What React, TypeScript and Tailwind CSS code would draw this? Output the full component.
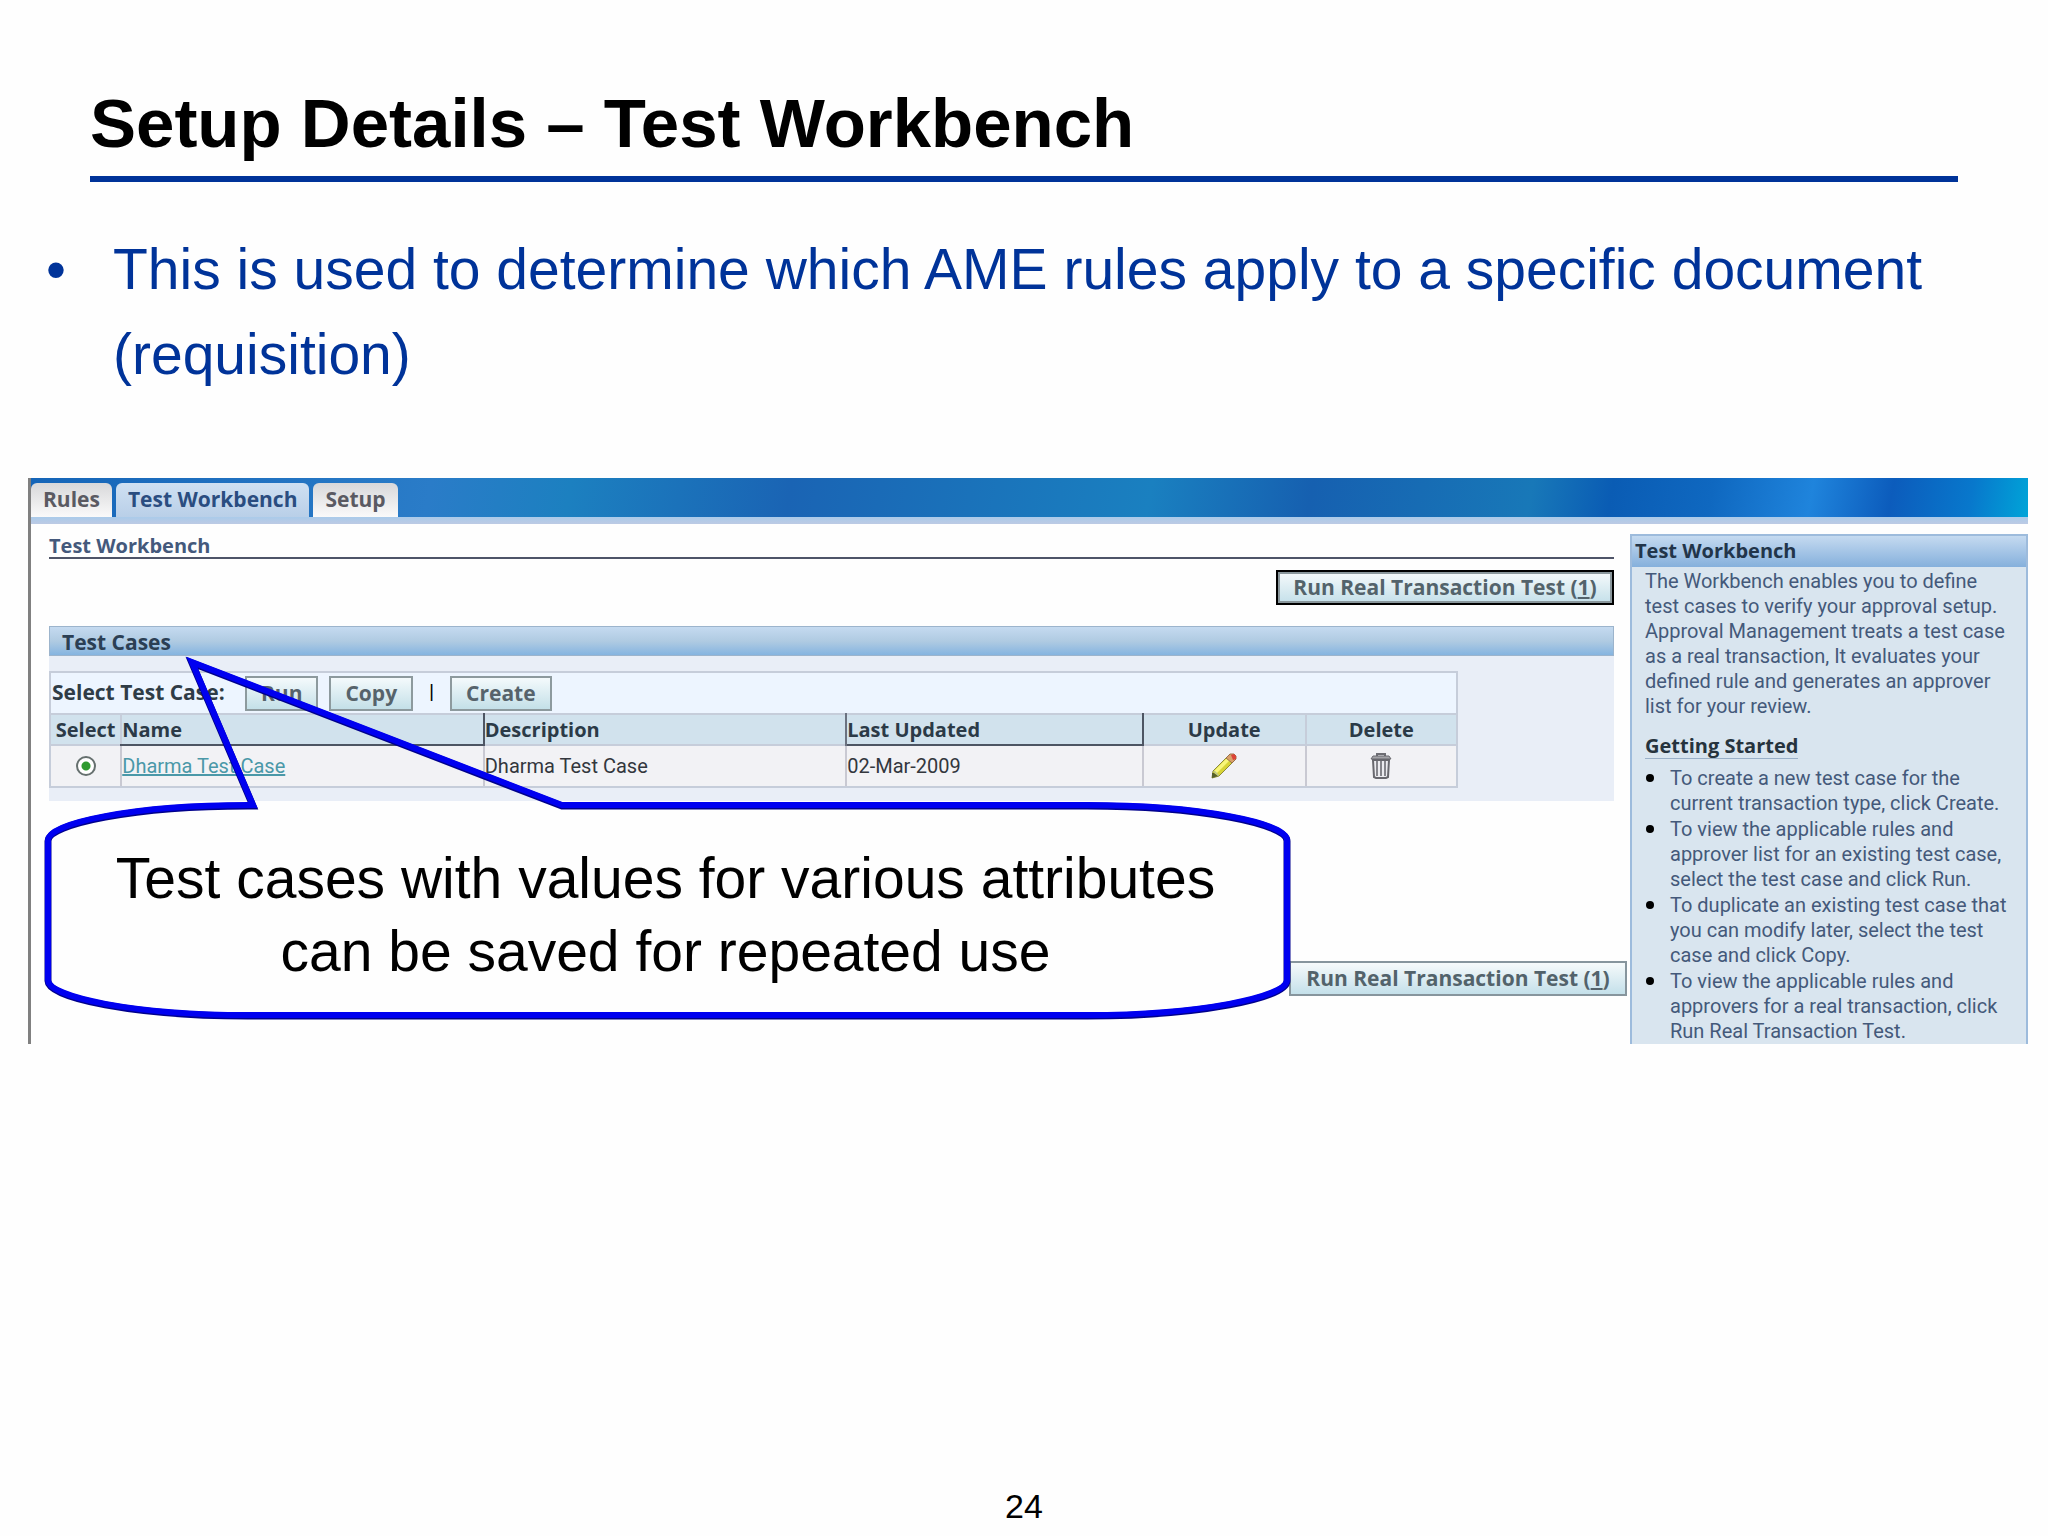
import { ReactNode, useState } from "react"

const NAV_TABS = ["Rules", "Test Workbench", "Setup"]

const HELP_STEPS = [
  ["To create a new test case for the", "current transaction type, click Create."],
  ["To view the applicable rules and", "approver list for an existing test case,", "select the test case and click Run."],
  ["To duplicate an existing test case that", "you can modify later, select the test", "case and click Copy."],
  ["To view the applicable rules and", "approvers for a real transaction, click", "Run Real Transaction Test."],
]

const INTRO_LINES = [
  "The Workbench enables you to define",
  "test cases to verify your approval setup.",
  "Approval Management treats a test case",
  "as a real transaction, It evaluates your",
  "defined rule and generates an approver",
  "list for your review.",
]

const TEST_CASES = [{ id: 1, name: "Dharma Test Case", description: "Dharma Test Case", updated: "02-Mar-2009" }]

function ActionButton({ children }: { children: ReactNode }) {
  return (
    <button className="h-[35px] px-[14px] border-2 border-[#8d9a9e] bg-gradient-to-b from-[#f4fafc] to-[#c4e0e8] font-['Open_Sans',sans-serif] text-[21px] leading-[25px] font-bold text-[#56636b] whitespace-nowrap">
      {children}
    </button>
  )
}

function RunRealButton({ focused = false }: { focused?: boolean }) {
  return (
    <button
      className={`h-[35px] w-[338px] border-2 bg-gradient-to-b from-[#f6fafb] to-[#c4e0ea] font-['Open_Sans',sans-serif] text-[21px] leading-[25px] font-bold text-[#53636b] whitespace-nowrap ${
        focused ? "border-black inset-ring-2 inset-ring-[#8a979c]" : "border-[#87959d]"
      }`}
    >
      Run Real Transaction Test (<span className="underline">1</span>)
    </button>
  )
}

function PencilIcon() {
  return (
    <svg className="mx-auto" width="26" height="26" viewBox="0 0 26 26">
      <path d="M1 25L2 18L16 4L22 9L8 23Z" fill="#d8d436" stroke="#8c8a3a" strokeWidth="1" />
      <path d="M3 18L16 5L19 7L5 21Z" fill="#f8f67a" />
      <path d="M15 5L19 1H23L25 3V6L21 10Z" fill="#d9a06a" stroke="#9a7048" strokeWidth="1" />
      <path d="M20 2L23 1L25 3V6L22 7Z" fill="#dc4438" />
      <path d="M1 25V20L3 20L7 23Z" fill="#56602c" />
      <path d="M2 18L4 20L7 23L8 22L4 18Z" fill="#b9c48c" />
    </svg>
  )
}

function TrashIcon() {
  return (
    <svg className="mx-auto" width="22" height="26" viewBox="0 0 22 26" fill="none">
      <path d="M7 3V1H15V3" stroke="#6e6e74" strokeWidth="2" />
      <path d="M1 6L3 3H19L21 6Z" fill="#a4a4a8" stroke="#68686e" strokeWidth="1" />
      <path d="M3 7H19L18 24L16 25H6L4 24Z" fill="#ececf0" stroke="#68686e" strokeWidth="2" />
      <path d="M7 8V23M11 8V23M15 8V23" stroke="#85858b" strokeWidth="2" />
    </svg>
  )
}

const CALLOUT_PATH =
  "M209 151H204C90 151 4 169 4 186V326C4 343 90 361 204 361H1043C1156 361 1243 343 1243 326V186C1243 169 1156 151 1043 151H518L148 8Z"

// Bubble with its pointer, laid over the test case table
function Callout() {
  return (
    <div className="absolute left-[13px] top-[176px] w-[1247px] pointer-events-none">
      <svg className="block" width="1247" height="366" viewBox="0 0 1247 366" fill="none">
        <path d={CALLOUT_PATH} stroke="#00008c" strokeWidth="7" transform="translate(0 1)" />
        <path d={CALLOUT_PATH} stroke="#0000f0" strokeWidth="6" />
      </svg>
      <p className="absolute left-0 right-1 top-[188px] text-center text-[57px] leading-[73px] text-black font-['Liberation_Sans',sans-serif]">
        Test cases with values for various attributes
        <br />
        can be saved for repeated use
      </p>
    </div>
  )
}

function TestCaseTable() {
  const [selected, setSelected] = useState(1)

  return (
    <div className="mr-[156px] border-2 border-[#c6cdda] bg-[#edf5ff]">
      <div className="flex items-center h-10 pl-px text-[21px] font-bold text-[#2f3c46]">
        <span className="w-[193px] font-['Open_Sans',sans-serif] whitespace-nowrap">Select Test Case:</span>
        <div className="flex items-center gap-[11px]">
          <ActionButton>Run</ActionButton>
          <ActionButton>Copy</ActionButton>
          <span className="w-[15px] text-center font-normal text-black">|</span>
          <ActionButton>Create</ActionButton>
        </div>
      </div>
      <table className="w-full table-fixed border-collapse text-xl leading-[25px] text-[#33373d]">
        <colgroup>
          <col className="w-[5%]" />
          <col className="w-[25.8%]" />
          <col className="w-[25.8%]" />
          <col className="w-[21.1%]" />
          <col className="w-[11.6%]" />
          <col className="w-[10.7%]" />
        </colgroup>
        <thead className="font-['Open_Sans',sans-serif]">
          <tr className="h-[31px] bg-[#d1e2ed] text-left text-[#2b3a47] border-y-2 border-[#c6cdda]">
            <th className="text-center">Select</th>
            <th className="border-b-2 border-r-2 border-[#4d5563] border-l-2 border-l-[#c6cdda]">Name</th>
            <th className="border-r-2 border-r-[#6b7280]">Description</th>
            <th className="border-b-2 border-r-2 border-[#4d5563]">Last Updated</th>
            <th className="text-center border-r-2 border-r-[#c6cdda]">Update</th>
            <th className="text-center">Delete</th>
          </tr>
        </thead>
        <tbody>
          {TEST_CASES.map((row) => (
            <tr key={row.id} className="h-[41px] bg-[#f2f2f5]">
              <td>
                <input
                  type="radio"
                  name="test-case"
                  aria-label={row.name}
                  checked={selected === row.id}
                  onChange={() => setSelected(row.id)}
                  className="block mx-auto appearance-none size-5 rounded-full border-2 border-[#66706f] bg-[radial-gradient(circle,#2f9a2f_0_4px,#ffffff_5px)]"
                />
              </td>
              <td className="border-x-2 border-[#c9c9d2]">
                <a href="#" className="underline text-[#4a98a8]">{row.name}</a>
              </td>
              <td className="border-r-2 border-[#c9c9d2]">{row.description}</td>
              <td className="border-r-2 border-[#c9c9d2]">{row.updated}</td>
              <td className="border-r-2 border-[#c9c9d2]"><PencilIcon /></td>
              <td><TrashIcon /></td>
            </tr>
          ))}
        </tbody>
      </table>
    </div>
  )
}

function HelpPanel() {
  return (
    <aside className="w-[398px] shrink-0 mt-[10px] border-x-2 border-t-2 border-[#9dbbdc] bg-[#d9e5ef] text-[#44597a]">
      <h3 className="h-[31px] pl-[3px] bg-gradient-to-b from-[#c5daf0] to-[#85b0dc] font-['Open_Sans',sans-serif] text-xl leading-[29px] font-bold text-[#22354a]">
        Test Workbench
      </h3>
      <div className="pl-[13px] text-xl leading-[25px] whitespace-nowrap">
        <p className="pt-[2px]">
          {INTRO_LINES.map((line) => (
            <span key={line} className="block">{line}</span>
          ))}
        </p>
        <h4 className="inline-block mt-[14px] border-b border-[#9ab0c8] font-['Open_Sans',sans-serif] font-bold text-[#26333d]">Getting Started</h4>
        <ul className="mt-[7px] ml-[25px] flex flex-col gap-px">
          {HELP_STEPS.map((lines, i) => (
            <li key={i} className="relative">
              <span className="absolute -left-6 top-2 size-2 rounded-full bg-black" />
              {lines.map((line) => (
                <span key={line} className="block">{line}</span>
              ))}
            </li>
          ))}
        </ul>
      </div>
    </aside>
  )
}

function Workbench() {
  const [tab, setTab] = useState("Test Workbench")

  return (
    <section className="relative ml-7 mr-5 border-l-3 border-[#808080] font-[Roboto,sans-serif]">
      <nav className="flex items-end gap-1 h-[39px] bg-[linear-gradient(100deg,#1565b8_0%,#2a7cc8_20%,#1c80c0_27%,#1a64b4_38%,#1a80c0_56%,#1660b0_64%,#1878b8_75%,#0a5cb4_79%,#0f68c0_84%,#1f84dc_89%,#0c5cbc_93%,#0878cc_97%,#00a4d8_100%)]">
        {NAV_TABS.map((name) => (
          <button
            key={name}
            onClick={() => setTab(name)}
            className={`h-[34px] px-3 rounded-t-md font-['Open_Sans',sans-serif] text-[21px] font-bold ${
              tab === name ? "bg-gradient-to-b from-[#cfe0f2] to-[#b9cfe8] text-[#2a4d80]" : "bg-gradient-to-b from-[#d8d8da] to-[#fafafa] text-[#5a5a62]"
            }`}
          >
            {name}
          </button>
        ))}
      </nav>
      <div className="h-[7px] bg-gradient-to-b from-[#aacbea] to-[#bccae4]" />

      <div className="flex gap-[3px]">
        <div className="flex-1 pl-[18px]">
          <div className="mr-[13px]">
            <h2 className="mt-2 h-[27px] border-b-2 border-[#4e5468] font-['Open_Sans',sans-serif] text-xl leading-[27px] font-bold text-[#44597c]">
              Test Workbench
            </h2>
            <div className="flex justify-end pt-[11px] pb-[21px]">
              <RunRealButton focused />
            </div>
            <div className="bg-[#e9eef7] pb-[13px]">
              <h3 className="h-[30px] mb-[15px] pl-3 border border-[#9cb4cc] bg-gradient-to-b from-[#c5daf0] via-[#b0cbe2] to-[#85b4e0] font-['Open_Sans',sans-serif] text-[21px] leading-[30px] font-bold text-[#2b3f54]">
                Test Cases
              </h3>
              <TestCaseTable />
            </div>
          </div>
          <div className="flex justify-end pt-[160px]">
            <RunRealButton />
          </div>
        </div>
        <HelpPanel />
      </div>
      <Callout />
    </section>
  )
}

export default function App() {
  return (
    <div className="flex flex-col min-h-screen bg-[#fefefe] font-['Liberation_Sans',sans-serif]">
      <h1 className="mx-[90px] mt-[84px] pb-3 border-b-6 border-[#003399] text-[69px] leading-[80px] font-bold text-black">
        Setup Details – Test Workbench
      </h1>
      <ul className="mt-[45px] mb-[81px] pl-[113px] text-[57px] leading-[85px] text-[#003399]">
        <li className="relative">
          <span className="absolute -left-[67px]">•</span>
          This is used to determine which AME rules apply to a specific document
          <br />
          (requisition)
        </li>
      </ul>
      <Workbench />
      <footer className="mt-auto pb-[10px] text-center text-[34px] leading-[40px] text-black">24</footer>
    </div>
  )
}
